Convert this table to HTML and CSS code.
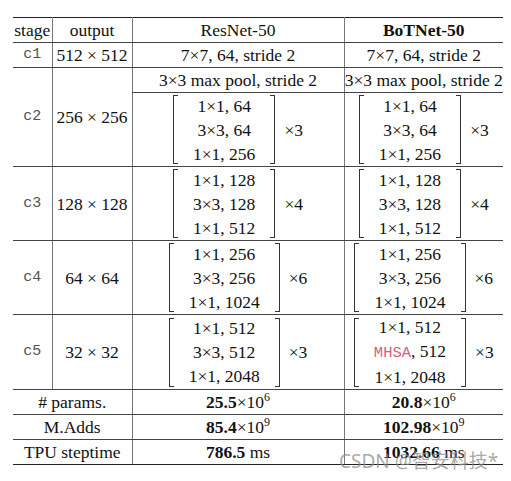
FILE: index.html
```html
<!DOCTYPE html>
<html>
	<head>
		<meta charset="UTF-8">
		<title>BoTNet-50</title>
		<link rel="stylesheet" href="styles.css">
	</head>
	<body>
		<div class="page">
			<table class="arch">
				<colgroup>
					<col class="c-stage">
					<col class="c-out">
					<col class="c-res">
					<col class="c-bot">
				</colgroup>
				<tr class="head">
					<th class="first">stage</th>
					<th>output</th>
					<th>ResNet-50</th>
					<th class="bold">BoTNet-50</th>
				</tr>
				<tr>
					<td class="first stage">c1</td>
					<td>512 × 512</td>
					<td>7×7, 64, stride 2</td>
					<td>7×7, 64, stride 2</td>
				</tr>
				<tr>
					<td class="first stage" rowspan="2">c2</td>
					<td rowspan="2">256 × 256</td>
					<td>3×3 max pool, stride 2</td>
					<td>3×3 max pool, stride 2</td>
				</tr>
				<tr class="tall">
					<td>
						<div class="block">
							<span class="brk"></span>
							<div class="lines"><div>1×1, 64</div><div>3×3, 64</div><div>1×1, 256</div></div>
							<span class="brk r"></span>
							<span class="times">×3</span>
						</div>
					</td>
					<td>
						<div class="block">
							<span class="brk"></span>
							<div class="lines"><div>1×1, 64</div><div>3×3, 64</div><div>1×1, 256</div></div>
							<span class="brk r"></span>
							<span class="times">×3</span>
						</div>
					</td>
				</tr>
				<tr class="tall">
					<td class="first stage">c3</td>
					<td>128 × 128</td>
					<td>
						<div class="block">
							<span class="brk"></span>
							<div class="lines"><div>1×1, 128</div><div>3×3, 128</div><div>1×1, 512</div></div>
							<span class="brk r"></span>
							<span class="times">×4</span>
						</div>
					</td>
					<td>
						<div class="block">
							<span class="brk"></span>
							<div class="lines"><div>1×1, 128</div><div>3×3, 128</div><div>1×1, 512</div></div>
							<span class="brk r"></span>
							<span class="times">×4</span>
						</div>
					</td>
				</tr>
				<tr class="tall">
					<td class="first stage">c4</td>
					<td>64 × 64</td>
					<td>
						<div class="block">
							<span class="brk"></span>
							<div class="lines"><div>1×1, 256</div><div>3×3, 256</div><div>1×1, 1024</div></div>
							<span class="brk r"></span>
							<span class="times">×6</span>
						</div>
					</td>
					<td>
						<div class="block">
							<span class="brk"></span>
							<div class="lines"><div>1×1, 256</div><div>3×3, 256</div><div>1×1, 1024</div></div>
							<span class="brk r"></span>
							<span class="times">×6</span>
						</div>
					</td>
				</tr>
				<tr class="tall">
					<td class="first stage">c5</td>
					<td>32 × 32</td>
					<td>
						<div class="block">
							<span class="brk"></span>
							<div class="lines"><div>1×1, 512</div><div>3×3, 512</div><div>1×1, 2048</div></div>
							<span class="brk r"></span>
							<span class="times">×3</span>
						</div>
					</td>
					<td>
						<div class="block">
							<span class="brk"></span>
							<div class="lines"><div>1×1, 512</div><div><span class="mhsa">MHSA</span>, 512</div><div>1×1, 2048</div></div>
							<span class="brk r"></span>
							<span class="times">×3</span>
						</div>
					</td>
				</tr>
				<tr>
					<td class="first" colspan="2"># params.</td>
					<td><b>25.5</b>×10<sup>6</sup></td>
					<td><b>20.8</b>×10<sup>6</sup></td>
				</tr>
				<tr>
					<td class="first" colspan="2">M.Adds</td>
					<td><b>85.4</b>×10<sup>9</sup></td>
					<td><b>102.98</b>×10<sup>9</sup></td>
				</tr>
				<tr class="last">
					<td class="first" colspan="2">TPU steptime</td>
					<td><b>786.5</b> ms</td>
					<td><b>1032.66</b> ms</td>
				</tr>
			</table>
			<div class="mark">CSDN @智安科技*</div>
		</div>
	</body>
</html>
```
FILE: styles.css
```css
body{
	margin:0;
	background:#fff;
	font-family:"Liberation Serif","Times New Roman",serif;
	color:#111;
}
.page{
	position:relative;
	width:511px;
	height:481px;
	padding:17px 0 0 13px;
	box-sizing:border-box;
}
.arch{
	border-collapse:collapse;
	table-layout:fixed;
	width:490px;
	font-size:17.5px;
	border-top:1px solid #222;
}
.c-stage{width:39px;}
.c-out{width:80px;}
.c-res{width:212px;}
.c-bot{width:159px;}

.arch th,
.arch td{
	height:24px;
	padding:0;
	text-align:center;
	vertical-align:middle;
	white-space:nowrap;
	font-weight:normal;
	border-left:1px solid #777;
	border-bottom:1px solid #444;
	line-height:20px;
}
.arch .first{
	border-left:none;
}
.arch .bold{
	font-weight:bold;
}
.arch .stage{
	font-family:"Liberation Mono","Courier New",monospace;
	font-size:15px;
	color:#555;
}
.arch tr.last td{
	border-bottom:1px solid #222;
}
.arch tr.tall td{
	height:73px;
}
.arch sup{
	font-size:12px;
	vertical-align:7px;
	line-height:0;
}

.block{
	display:flex;
	justify-content:center;
	align-items:center;
}
.brk{
	width:5px;
	height:69px;
	border:1.5px solid #333;
	border-right:none;
	box-sizing:border-box;
}
.brk.r{
	border-left:none;
	border-right:1.5px solid #333;
}
.lines{
	padding:0 15px;
	line-height:24px;
}
.times{
	margin-left:9px;
}
.mhsa{
	font-family:"Liberation Mono","Courier New",monospace;
	font-size:15.5px;
	color:#dc5a84;
}

.mark{
	position:absolute;
	left:339px;
	top:446px;
	font-family:"Noto Sans","Noto Sans CJK SC",sans-serif;
	font-size:19px;
	color:rgba(140,140,140,0.75);
	white-space:nowrap;
}
```
